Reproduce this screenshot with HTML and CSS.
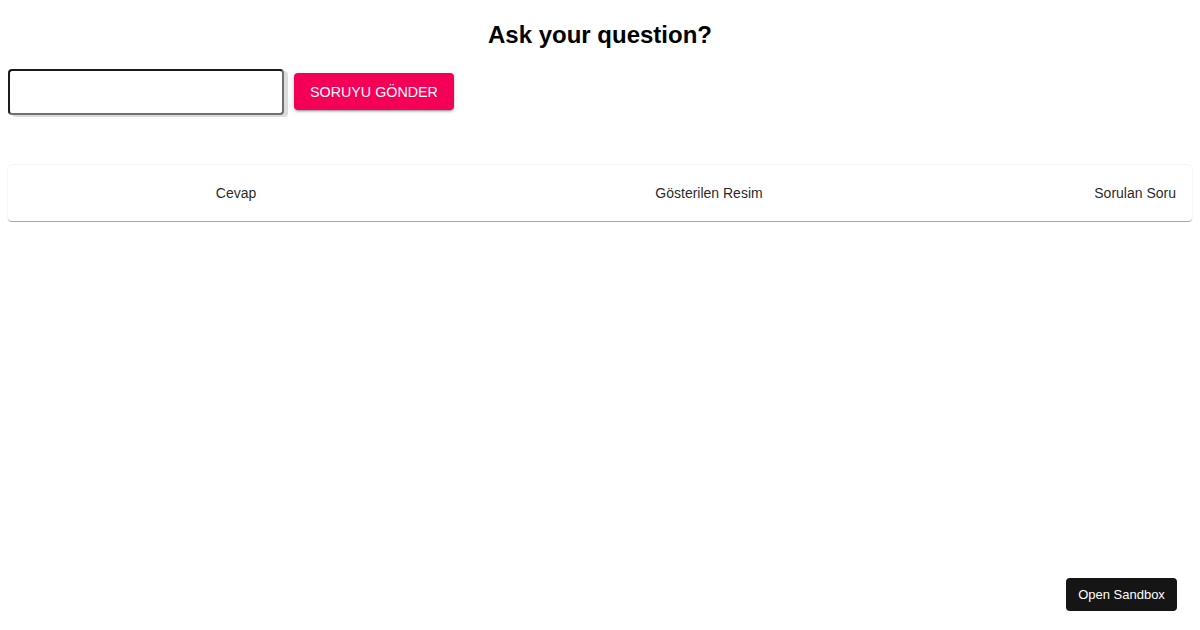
FILE: index.html
```html
<!DOCTYPE html>
<html>
<head>
<meta charset="utf-8">
<link rel="stylesheet" href="styles.css">
</head>
<body>
<div class="page">
  <h1 class="title">Ask your question?</h1>
  <div class="ask-row">
    <input class="ask-input" type="text">
    <button class="send-btn">Soruyu Gönder</button>
  </div>
  <div class="paper">
    <table class="qa-table">
      <colgroup>
        <col class="c1"><col class="c2"><col class="c3">
      </colgroup>
      <thead>
        <tr>
          <th class="center">Cevap</th>
          <th class="center">Gösterilen Resim</th>
          <th class="right">Sorulan Soru</th>
        </tr>
      </thead>
    </table>
  </div>
</div>
<a class="sandbox-btn">Open Sandbox</a>
</body>
</html>
```
FILE: styles.css
```css
html, body {
  margin: 0;
  padding: 0;
  background: #fff;
}
body {
  font-family: "Liberation Sans", Arial, sans-serif;
  color: #000;
}
.page {
  padding: 21px 8px 0;
}
.title {
  margin: 0;
  font-size: 24px;
  line-height: 28px;
  font-weight: bold;
  text-align: center;
}
.ask-row {
  display: flex;
  align-items: center;
  margin-top: 20px;
}
.ask-input {
  box-sizing: border-box;
  width: 276px;
  height: 46px;
  margin: 0 10px 0 0;
  border: 2px solid;
  border-color: #1b1b1b #6f6f6f #6f6f6f #1b1b1b;
  border-radius: 4px;
  background: #fff;
  box-shadow: 4px 2px 0 #dcdcdc;
  outline: none;
  font-size: 16px;
}
.send-btn {
  box-sizing: border-box;
  height: 37px;
  margin-top: -1px;
  padding: 0 16px;
  border: none;
  border-radius: 4px;
  background: #f50057;
  color: #fff;
  font-family: "Liberation Sans", Arial, sans-serif;
  font-size: 14.3px;
  text-transform: uppercase;
  box-shadow: 0 3px 1px -2px rgba(0,0,0,0.2), 0 2px 2px 0 rgba(0,0,0,0.14), 0 1px 5px 0 rgba(0,0,0,0.12);
  cursor: pointer;
}
.paper {
  margin-top: 50px;
  background: #fff;
  border-radius: 4px;
  border-bottom: 1.5px solid #a9a9a9;
  box-shadow: 0 0 2px 0 rgba(0,0,0,0.12);
}
.qa-table {
  width: 100%;
  border-collapse: collapse;
  table-layout: fixed;
}
.c1 { width: 456px; }
.c2 { width: 490px; }
.c3 { width: 238px; }
.qa-table th {
  height: 56px;
  padding: 0 16px;
  font-size: 14px;
  font-weight: normal;
  color: rgba(0,0,0,0.87);
}
.center { text-align: center; }
.right { text-align: right; }
.sandbox-btn {
  position: fixed;
  right: 23px;
  bottom: 19px;
  width: 111px;
  height: 33px;
  line-height: 33px;
  text-align: center;
  background: #151515;
  color: #fff;
  border-radius: 4px;
  font-size: 13px;
}
```
